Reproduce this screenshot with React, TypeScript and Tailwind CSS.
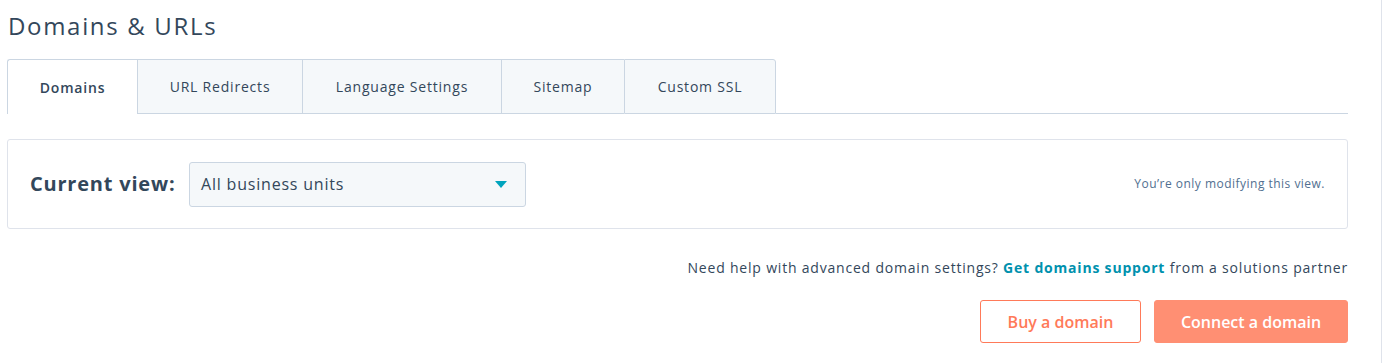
export default function App() {
  const tabs = [
    { label: "URL Redirects", w: "w-[165px]" },
    { label: "Language Settings", w: "w-[199px]" },
    { label: "Sitemap", w: "w-[123px]" },
  ];

  return (
    <div className="flex h-[363px] w-[1384px] bg-white font-['Open_Sans',sans-serif] tracking-[0.05em] text-[#33475b]">
      <div className="flex-1 border-r border-[#dfe3eb] pl-[7px] pr-[33px]">
        <h1 className="pl-px pt-[10px] text-[24px] leading-[32px] font-normal tracking-[0.07em]">Domains &amp; URLs</h1>

        {/* tabs */}
        <div className="mt-[17px] flex h-[55px] text-[14px]">
          <div className="flex w-[130px] items-center justify-center rounded-tl-[3px] border-t border-l border-[#cbd6e2] bg-white font-semibold">
            Domains
          </div>
          {tabs.map((t) => (
            <div
              key={t.label}
              className={`flex ${t.w} items-center justify-center border-t border-b border-l border-[#cbd6e2] bg-[#f5f8fa]`}
            >
              {t.label}
            </div>
          ))}
          <div className="flex w-[152px] items-center justify-center rounded-tr-[3px] border border-[#cbd6e2] bg-[#f5f8fa]">
            Custom SSL
          </div>
          <div className="flex-1 border-b border-[#cbd6e2]" />
        </div>

        {/* current view panel */}
        <div className="mt-[25px] flex h-[90px] items-center rounded-[3px] border border-[#dfe3eb] pl-[22px] pr-[22px]">
          <span className="w-[146px] text-[20px] font-bold tracking-[0.04em]">Current view:</span>
          <div className="ml-[13px] flex h-[45px] w-[337px] items-center justify-between rounded-[3px] border border-[#cbd6e2] bg-[#f5f8fa] pl-[11px] pr-[18px] text-[16px]">
            <span>All business units</span>
            <svg width="12" height="7" viewBox="0 0 12 7">
              <path d="M0 0h12L6 7z" fill="#00a4bd" />
            </svg>
          </div>
          <span className="ml-auto text-[12px] tracking-[0.04em] text-[#516f90]">You’re only modifying this view.</span>
        </div>

        <p className="mt-[29px] text-right text-[14px] leading-[20px]">
          Need help with advanced domain settings?{" "}
          <span className="font-bold text-[#0091ae]">Get domains support</span> from a solutions partner
        </p>

        <div className="mt-[22px] flex justify-end gap-[13px] text-[16px] font-semibold tracking-normal">
          <button className="h-[43px] w-[161px] rounded-[3px] border border-[#ff7a59] bg-white text-[#ff7a59]">
            Buy a domain
          </button>
          <button className="h-[43px] w-[194px] rounded-[3px] border border-[#ff8f73] bg-[#ff8f73] text-white">
            Connect a domain
          </button>
        </div>
      </div>
      <div className="w-[2px] bg-white" />
    </div>
  );
}
